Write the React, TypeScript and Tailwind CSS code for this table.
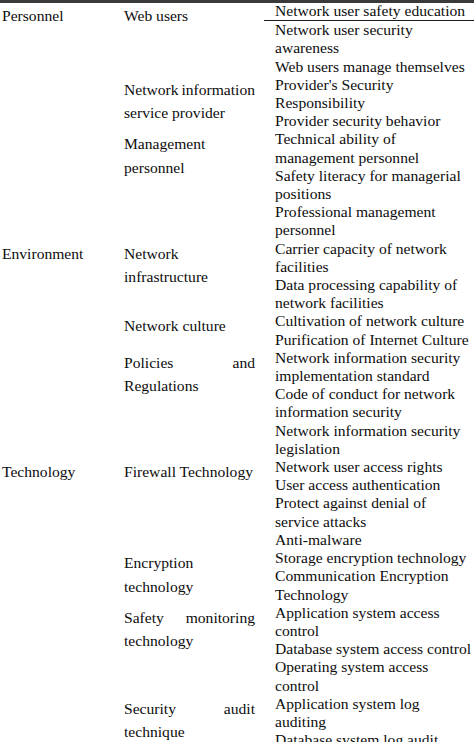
type Group = {
  label: string[];
  items: string[][];
};

type Category = {
  name: string;
  groups: Group[];
};

const DATA: Category[] = [
  {
    name: 'Personnel',
    groups: [
      {
        label: ['Web users'],
        items: [
          ['Network user safety education'],
          ['Network user security', 'awareness'],
          ['Web users manage themselves'],
        ],
      },
      {
        label: ['Network information', 'service provider'],
        items: [["Provider's Security", 'Responsibility'], ['Provider security behavior']],
      },
      {
        label: ['Management', 'personnel'],
        items: [
          ['Technical ability of', 'management personnel'],
          ['Safety literacy for managerial', 'positions'],
          ['Professional management', 'personnel'],
        ],
      },
    ],
  },
  {
    name: 'Environment',
    groups: [
      {
        label: ['Network', 'infrastructure'],
        items: [
          ['Carrier capacity of network', 'facilities'],
          ['Data processing capability of', 'network facilities'],
        ],
      },
      {
        label: ['Network culture'],
        items: [['Cultivation of network culture'], ['Purification of Internet Culture']],
      },
      {
        label: ['Policies and', 'Regulations'],
        items: [
          ['Network information security', 'implementation standard'],
          ['Code of conduct for network', 'information security'],
          ['Network information security', 'legislation'],
        ],
      },
    ],
  },
  {
    name: 'Technology',
    groups: [
      {
        label: ['Firewall Technology'],
        items: [
          ['Network user access rights'],
          ['User access authentication'],
          ['Protect against denial of', 'service attacks'],
          ['Anti-malware'],
        ],
      },
      {
        label: ['Encryption', 'technology'],
        items: [['Storage encryption technology'], ['Communication Encryption', 'Technology']],
      },
      {
        label: ['Safety monitoring', 'technology'],
        items: [
          ['Application system access', 'control'],
          ['Database system access control'],
          ['Operating system access', 'control'],
        ],
      },
      {
        label: ['Security audit', 'technique'],
        items: [['Application system log', 'auditing'], ['Database system log audit']],
      },
    ],
  },
];

function LabelLine({ text, justify }: { text: string; justify: boolean }) {
  const words = text.split(' ');
  if (!justify || words.length < 2) {
    return <div className="whitespace-nowrap leading-[23.5px]">{text}</div>;
  }
  return (
    <div className="flex justify-between whitespace-nowrap leading-[23.5px]">
      {words.map((w, i) => (
        <span key={i}>{w}</span>
      ))}
    </div>
  );
}

function GroupRow({ group, first }: { group: Group; first: boolean }) {
  return (
    <div className="grid grid-cols-[140px_1fr]">
      <div className="w-[131px] pt-[2px]">
        {group.label.map((line, i) => (
          <LabelLine key={i} text={line} justify={i < group.label.length - 1} />
        ))}
      </div>
      <div>
        {group.items.map((item, i) => (
          <div key={i} className={first && i === 0 ? 'border-b border-[#1a1a1a]' : ''}>
            {item.map((line, j) => (
              <div key={j} className="whitespace-nowrap pl-[11px] leading-[18.2px]">
                {line}
              </div>
            ))}
          </div>
        ))}
      </div>
    </div>
  );
}

export default function App() {
  return (
    <div
      className="h-[742px] w-[474px] overflow-hidden bg-white text-[15.6px] text-[#0d0d0d]"
      style={{ fontFamily: '"Liberation Serif", "Times New Roman", serif' }}
    >
      <div className="h-[3px] bg-[#3a3a3a]" />
      <div className="-mt-px">
        {DATA.map((cat, ci) => (
          <div key={cat.name} className="grid grid-cols-[124px_1fr]">
            <div className="pl-[2px] pt-[2px] leading-[23.5px]">{cat.name}</div>
            <div>
              {cat.groups.map((g, gi) => (
                <GroupRow key={gi} group={g} first={ci === 0 && gi === 0} />
              ))}
            </div>
          </div>
        ))}
      </div>
    </div>
  );
}
